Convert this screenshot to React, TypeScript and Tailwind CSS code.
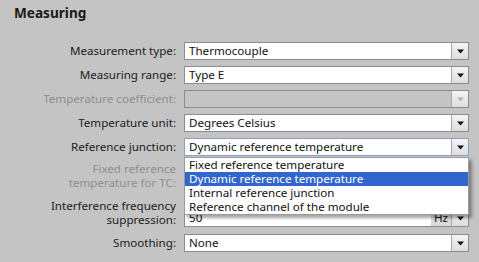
const font = { fontFamily: '"Noto Sans", "Open Sans", sans-serif' };

function Arrow({ disabled }: { disabled?: boolean }) {
  return (
    <span className="flex w-[17px] shrink-0 items-center justify-center self-stretch border-l border-[#a9a9a9] bg-gradient-to-b from-[#f4f4f4] to-[#dedede]">
      <svg width="9" height="5" viewBox="0 0 9 5">
        <path d="M1 0.5h7L4.5 4.5z" fill={disabled ? "#b4b4b4" : "#111"} />
      </svg>
    </span>
  );
}

function Select({
  value,
  disabled,
  focused,
  unit,
}: {
  value?: string;
  disabled?: boolean;
  focused?: boolean;
  unit?: string;
}) {
  return (
    <div
      className={
        "flex h-[18px] flex-1 items-stretch border " +
        (focused ? "border-[#8a9fc6] " : "border-[#8c8c8c] ") +
        (disabled ? "bg-[#c4c4c4]" : "bg-white")
      }
    >
      <span className="flex-1 truncate pl-[4px] text-[11.6px] leading-[16px] text-[#111]">{value}</span>
      {unit && (
        <span className="flex items-center bg-[#dadada] px-[3px] text-[11.6px] leading-[16px] text-[#111]">
          {unit}
        </span>
      )}
      <Arrow disabled={disabled} />
    </div>
  );
}

function Row({
  label,
  disabled,
  children,
  className = "",
}: {
  label: React.ReactNode;
  disabled?: boolean;
  children?: React.ReactNode;
  className?: string;
}) {
  return (
    <div className={"flex items-end gap-[8px] " + className}>
      <div
        className={
          "w-[176px] shrink-0 text-right text-[11.6px] leading-[14px] " +
          (disabled ? "text-[#8e8e8e]" : "text-[#1b1b1b]")
        }
      >
        {label}
      </div>
      {children}
    </div>
  );
}

const options = [
  "Fixed reference temperature",
  "Dynamic reference temperature",
  "Internal reference junction",
  "Reference channel of the module",
];

export default function App() {
  return (
    <div style={font} className="h-[262px] w-[479px] overflow-hidden bg-[#c4c4c4] pr-[10px]">
      <div className="pl-[14px] pt-[3px] text-[13.6px] font-bold leading-[20px] text-[#1a1a1a]">Measuring</div>

      <div className="mt-[19px] flex flex-col">
        <Row label={<span className="block pb-[2px]">Measurement type:</span>}>
          <Select value="Thermocouple" />
        </Row>
        <Row className="mt-[6px]" label={<span className="block pb-[2px]">Measuring range:</span>}>
          <Select value="Type E" />
        </Row>
        <Row className="mt-[6px]" disabled label={<span className="block pb-[2px]">Temperature coefficient:</span>}>
          <Select disabled />
        </Row>
        <Row className="mt-[6px]" label={<span className="block pb-[2px]">Temperature unit:</span>}>
          <Select value="Degrees Celsius" />
        </Row>
        <Row className="relative z-10 mt-[6px]" label={<span className="block pb-[2px]">Reference junction:</span>}>
          <div className="relative flex flex-1">
            <Select value="Dynamic reference temperature" focused />
            <div className="absolute left-0 right-0 top-[19px] border border-[#9a9a9a] bg-white shadow-[3px_3px_3px_rgba(0,0,0,0.35)]">
              {options.map((o, i) => (
                <div
                  key={o}
                  className={
                    "h-[14px] pl-[4px] text-[11.6px] leading-[14px] " +
                    (i === 1 ? "bg-[#3366cc] text-white" : "text-[#111]")
                  }
                >
                  {o}
                </div>
              ))}
            </div>
          </div>
        </Row>
        <Row
          className="mt-[6px]"
          disabled
          label={
            <>
              Fixed reference
              <br />
              temperature for TC:
            </>
          }
        />
        <Row
          className="mt-[9px]"
          label={
            <>
              Interference frequency
              <br />
              suppression:
            </>
          }
        >
          <Select value="50" unit="Hz" />
        </Row>
        <Row className="mt-[7px]" label={<span className="block pb-[2px]">Smoothing:</span>}>
          <Select value="None" />
        </Row>
      </div>
    </div>
  );
}
